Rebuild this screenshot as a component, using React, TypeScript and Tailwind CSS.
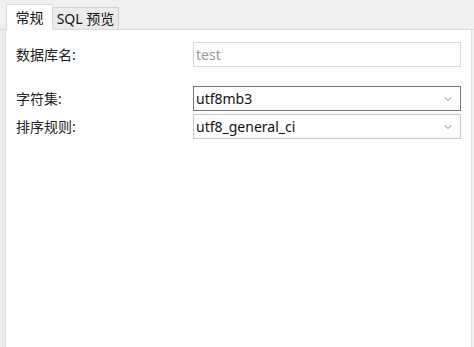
import { ChevronDown } from "lucide-react";

const FONT = "font-['Noto_Sans','Noto_Sans_CJK_SC',sans-serif]";

function Chevron() {
  return <ChevronDown className="w-[12px] h-[12px] text-[#555]" strokeWidth={1.5} />;
}

function Row({ label, children, className }: { label: string; children: React.ReactNode; className?: string }) {
  return (
    <div className={"flex items-center " + (className ?? "")}>
      <div className="w-[187px] pl-[10px] text-[14px] text-[#222]">{label}</div>
      {children}
    </div>
  );
}

export default function App() {
  return (
    <div className={"w-[474px] h-[347px] bg-[#f0f0f0] flex flex-col " + FONT}>
      <div className="flex items-end h-[30px] pl-[6px] border-b border-[#d9d9d9]">
        <div className="h-[26px] w-[47px] bg-white border-x border-t border-[#d9d9d9] -mb-px flex items-center justify-center text-[14px] text-[#111]">
          常规
        </div>
        <div className="h-[22px] w-[66px] bg-[#ebebeb] border-r border-t border-[#d0d0d0] flex items-center justify-center text-[14px] text-[#111]">
          SQL 预览
        </div>
      </div>
      <div className="flex-1 flex">
        <div className="w-[6px] bg-[#ececec] border-r border-[#dcdcdc]" />
        <div className="flex-1 bg-white border-r border-[#e2e2e2] mr-[2px] pt-[12px]">
          <Row label="数据库名:">
            <div className="w-[268px] h-[25px] border border-[#dadada] flex items-center px-[2px] text-[14px] text-[#9a9a9a]">
              test
            </div>
          </Row>
          <Row label="字符集:" className="mt-[19px]">
            <div className="w-[268px] h-[25px] border border-[#767676] flex items-center justify-between pl-[2px] pr-[6px] text-[14px] text-[#111]">
              <span>utf8mb3</span>
              <Chevron />
            </div>
          </Row>
          <Row label="排序规则:" className="mt-[3px]">
            <div className="w-[268px] h-[25px] border border-[#c9c9c9] flex items-center justify-between pl-[2px] pr-[6px] text-[14px] text-[#111]">
              <span>utf8_general_ci</span>
              <Chevron />
            </div>
          </Row>
        </div>
      </div>
    </div>
  );
}
